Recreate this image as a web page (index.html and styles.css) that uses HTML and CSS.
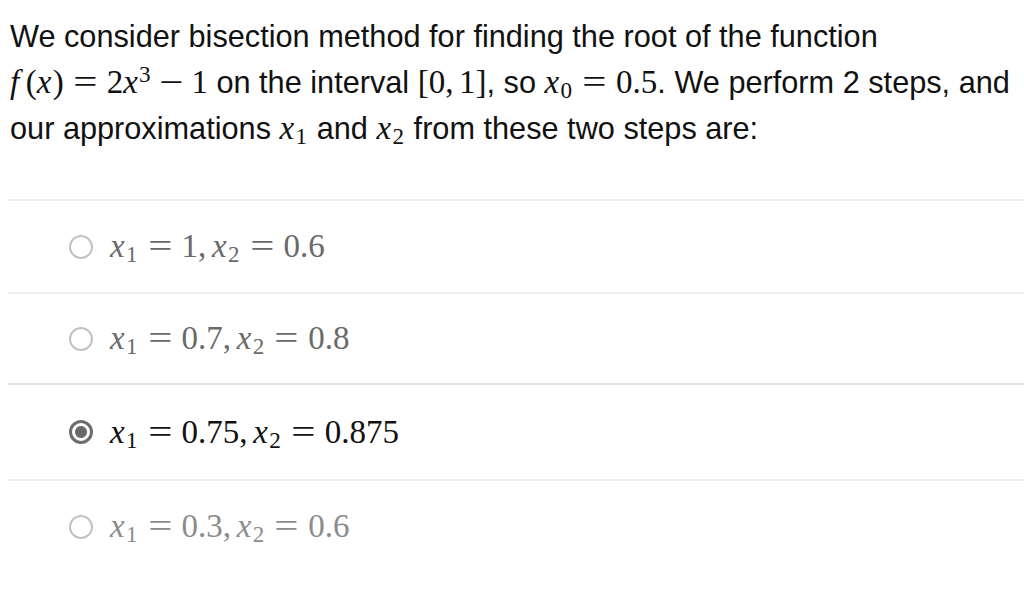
FILE: index.html
```html
<!DOCTYPE html>
<html>
<head>
<meta charset="utf-8">
<link rel="stylesheet" href="styles.css">
</head>
<body>
<div class="question">
  <p class="stem">We consider bisection method for finding the root of the function <span class="m"><i class="fn">f</i>(<i>x</i>)<span class="op"><span class="g">=</span></span>2<i>x</i><sup>3</sup><span class="bin"><span class="g">−</span></span>1</span> on the interval <span class="m">[0,<span class="thin"></span>1]</span>, so <span class="m"><i>x</i><sub>0</sub><span class="op"><span class="g">=</span></span>0.5</span>. We perform 2 steps, and our approximations <span class="m"><i>x</i><sub>1</sub></span> and <span class="m"><i>x</i><sub>2</sub></span> from these two steps are:</p>
  <ul class="options">
    <li class="option"><span class="radio"></span><span class="m"><i>x</i><sub>1</sub><span class="op"><span class="g">=</span></span>1,<span class="thin"></span><i>x</i><sub>2</sub><span class="op"><span class="g">=</span></span>0.6</span></li>
    <li class="option"><span class="radio"></span><span class="m"><i>x</i><sub>1</sub><span class="op"><span class="g">=</span></span>0.7,<span class="thin"></span><i>x</i><sub>2</sub><span class="op"><span class="g">=</span></span>0.8</span></li>
    <li class="option selected"><span class="radio"></span><span class="m"><i>x</i><sub>1</sub><span class="op"><span class="g">=</span></span>0.75,<span class="thin"></span><i>x</i><sub>2</sub><span class="op"><span class="g">=</span></span>0.875</span></li>
    <li class="option faded"><span class="radio"></span><span class="m"><i>x</i><sub>1</sub><span class="op"><span class="g">=</span></span>0.3,<span class="thin"></span><i>x</i><sub>2</sub><span class="op"><span class="g">=</span></span>0.6</span></li>
  </ul>
</div>
</body>
</html>
```
FILE: styles.css
```css
html, body {
  margin: 0;
  padding: 0;
  background: #fff;
}
body {
  font-family: "Liberation Sans", Arial, sans-serif;
  color: #111;
}
.question {
  padding: 14px 0 0 0;
}
.stem {
  margin: 0 0 0 10px;
  font-size: 30.7px;
  line-height: 46px;
  width: 1008px;
}
.m {
  font-family: "Liberation Serif", "Times New Roman", serif;
  font-size: 33px;
  line-height: 1;
  white-space: nowrap;
}
.m i {
  font-style: italic;
  padding-right: 0.04em;
}
.m i.fn {
  padding-right: 0.2em;
}
.m sub, .m sup {
  font-size: 0.7em;
  line-height: 0;
  padding-right: 0.05em;
}
.m sub {
  vertical-align: -0.22em;
}
.m sup {
  vertical-align: 0.48em;
}
.op {
  display: inline-block;
  width: 1.3em;
  text-align: center;
}
.bin {
  display: inline-block;
  width: 1.2em;
  text-align: center;
}
.g {
  display: inline-block;
  transform: scaleX(1.3);
}
.thin {
  display: inline-block;
  width: 0.17em;
}
.options {
  list-style: none;
  margin: 47px 0 0 8px;
  padding: 0;
}
.option {
  display: flex;
  align-items: center;
  height: 91px;
  border-top: 2px solid #efefef;
  padding-left: 61px;
  color: #6a6a6a;
}
.option:nth-child(2) {
  height: 89px;
}
.option.selected {
  color: #111;
  border-top-color: #e2e2e2;
  height: 94px;
}
.option.faded {
  color: #8c8c8c;
}
.radio {
  width: 20px;
  height: 20px;
  border: 2px solid #c2c2c2;
  border-radius: 50%;
  box-sizing: content-box;
  margin-right: 17px;
  flex: none;
}
.selected .radio {
  border: 3px solid #6e6e6e;
  width: 18px;
  height: 18px;
  background: radial-gradient(circle, #6a6a6a 0 5.5px, #fff 6.5px);
}
```
